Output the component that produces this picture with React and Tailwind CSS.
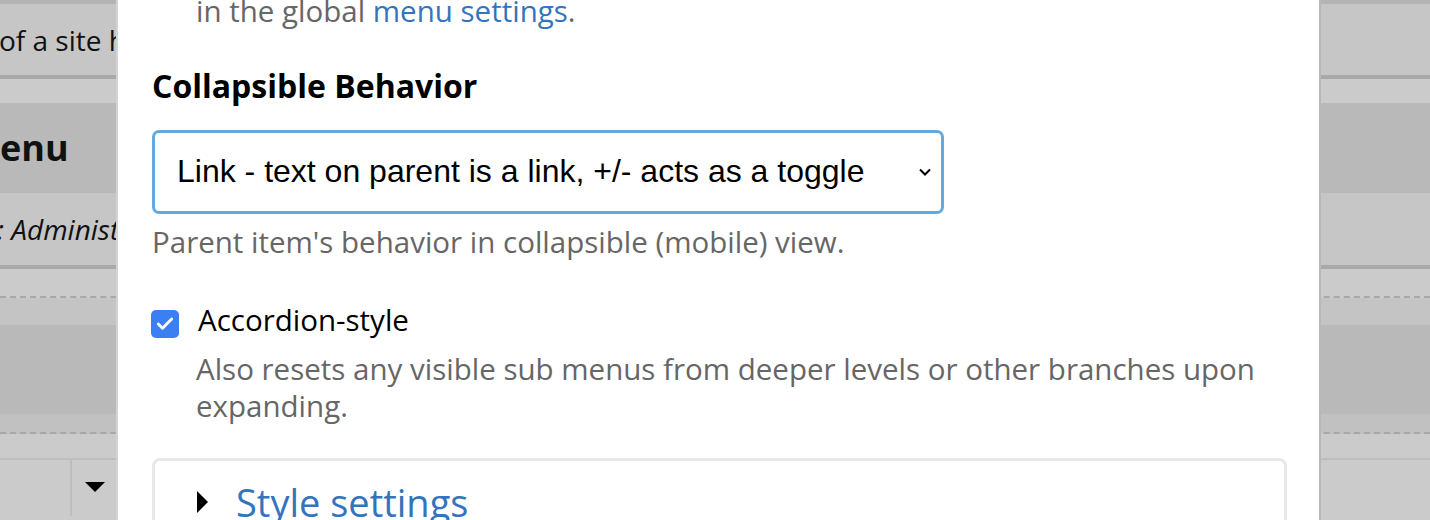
import { Check } from 'lucide-react'

const sans = { fontFamily: '"Open Sans", "Liberation Sans", sans-serif' }

function Backdrop() {
  return (
    <div className="w-full text-[28px] text-[#111]" style={sans}>
      <div className="h-[4px] bg-[#b4b4b4]" />
      <div className="h-[71px] bg-[#c6c6c6] flex items-center whitespace-nowrap">
        <span className="-ml-[1px]">of a site header</span>
      </div>
      <div className="h-[4px] bg-[#a9a9a9]" />
      <div className="h-[24px] bg-[#cbcbcb]" />
      <div className="h-[90px] bg-[#b9b9b9] flex items-center whitespace-nowrap">
        <span className="text-[36px] font-bold">enu</span>
      </div>
      <div className="h-[72px] bg-[#c6c6c6] flex items-center whitespace-nowrap">
        <span className="italic -ml-[3px]">: Administration</span>
      </div>
      <div className="h-[4px] bg-[#a9a9a9]" />
      <div className="h-[29px] bg-[#cbcbcb] border-b-2 border-dashed border-[#a8a8a8]" />
      <div className="h-[27px] bg-[#c4c4c4]" />
      <div className="h-[89px] bg-[#b9b9b9]" />
      <div className="h-[20px] bg-[#c1c1c1] border-b-2 border-dashed border-[#a8a8a8]" />
      <div className="h-[26px] bg-[#cbcbcb] border-b-2 border-[#bdbdbd]" />
      <div className="h-[56px] bg-[#cbcbcb] flex">
        <div className="w-[72px] border-r-2 border-[#bdbdbd]" />
        <div className="w-[46px] flex items-center justify-center pb-[2px]">
          <svg width="20" height="10" viewBox="0 0 20 10"><path d="M0 0h20L10 10z" fill="#000" /></svg>
        </div>
      </div>
    </div>
  )
}

export default function App() {
  return (
    <div className="relative h-[520px] w-[1430px] overflow-hidden bg-[#cbcbcb]">
      <Backdrop />

      {/* dialog */}
      <div className="absolute top-0 left-[116px] h-full w-[1205px] flex">
        <div className="w-[2px] bg-[#d3d3d3]" />
        <div className="w-[1201px] bg-white overflow-hidden" style={sans}>
          <div className="pl-[34px] pr-[32px] -mt-[8px]">
            <p className="pl-[44px] text-[29.5px] leading-[37px] text-[#666]">
              in the global <a className="text-[#3474bd]">menu settings</a>.
            </p>

            <h3 className="mt-[37px] text-[32px] leading-[40px] font-bold text-black">Collapsible Behavior</h3>

            <div className="mt-[24px] w-[792px] h-[84px] border-[3px] border-[#63a9df] rounded-[7px] flex items-center justify-between pl-[22px] pr-[9px]">
              <span className="text-[32px] text-black -mt-[2px]" style={{ fontFamily: '"Liberation Sans", Arial, sans-serif' }}>
                Link - text on parent is a link, +/- acts as a toggle
              </span>
              <svg width="14" height="8" viewBox="0 0 14 8">
                <path d="M2 1.5 7 6.5l5-5" fill="none" stroke="#000" strokeWidth="2" />
              </svg>
            </div>
            <p className="mt-[9px] text-[29.5px] leading-[37px] text-[#666]">Parent item's behavior in collapsible (mobile) view.</p>

            <div className="mt-[41px] flex items-start">
              <div className="mt-[9px] w-[28px] h-[28px] rounded-[5px] bg-[#3b7ff3] flex items-center justify-center -ml-[1px]">
                <Check size={20} strokeWidth={3.5} color="#fff" />
              </div>
              <span className="ml-[19px] text-[29.5px] leading-[37px] text-black">Accordion-style</span>
            </div>
            <p className="mt-[12px] pl-[44px] text-[29.5px] leading-[37px] text-[#666]">
              Also resets any visible sub menus from deeper levels or other branches upon expanding.
            </p>

            <div className="mt-[34px] border-[3px] border-[#e8e8e8] rounded-[8px] h-[120px]">
              <div className="pl-[42px] pt-[15px] flex items-center">
                <svg width="11" height="22" viewBox="0 0 11 22"><path d="M0 0l11 11L0 22z" fill="#000" /></svg>
                <span className="ml-[28px] text-[38px] leading-[52px] text-[#3474bd]">Style settings</span>
              </div>
            </div>
          </div>
        </div>
        <div className="w-[2px] bg-[#b8b8b8]" />
      </div>
    </div>
  )
}
